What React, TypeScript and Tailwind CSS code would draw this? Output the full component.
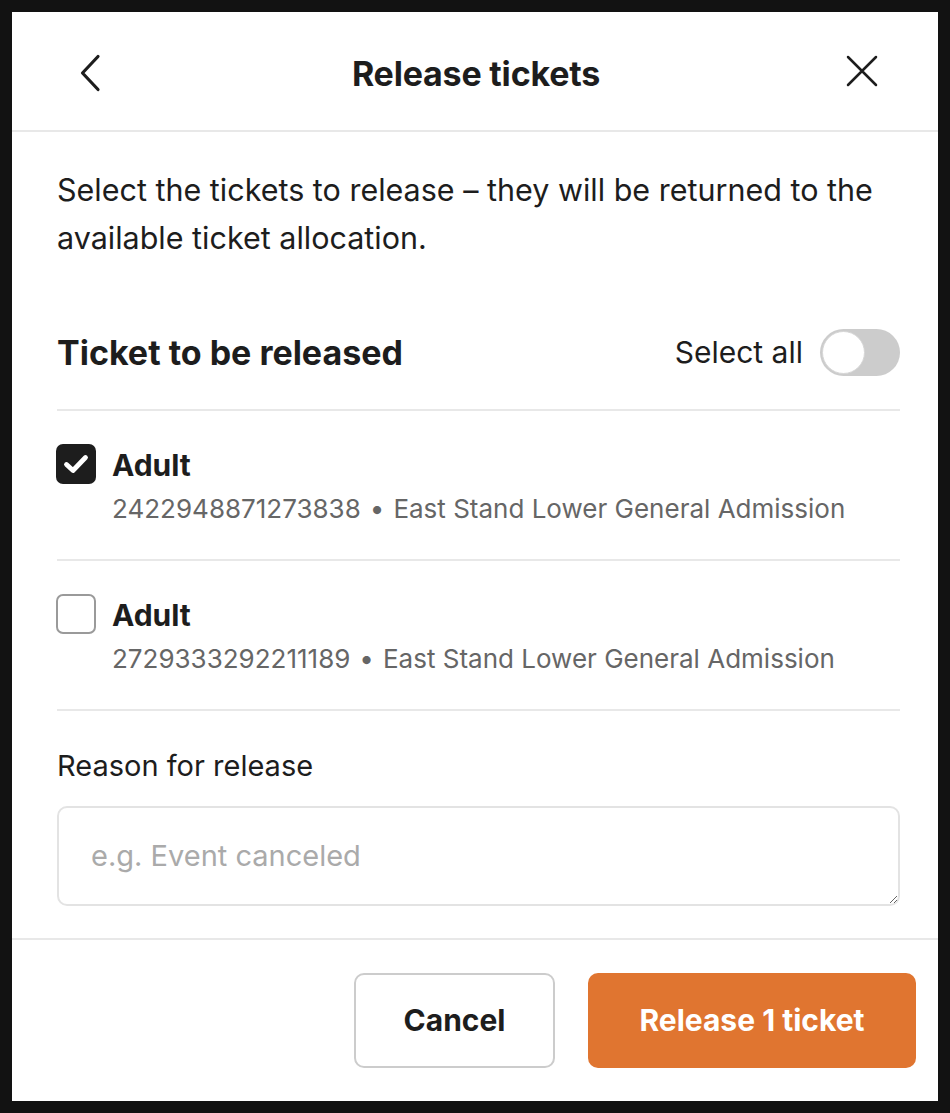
import React, { useState } from 'react';

interface Ticket {
  id: string;
  label: string;
  number: string;
  area: string;
}

const tickets: Ticket[] = [
  { id: 't1', label: 'Adult', number: '2422948871273838', area: 'East Stand Lower General Admission' },
  { id: 't2', label: 'Adult', number: '2729333292211189', area: 'East Stand Lower General Admission' },
];

const App: React.FC = () => {
  const [selected, setSelected] = useState<string[]>(['t1']);
  const [selectAll, setSelectAll] = useState(false);
  const [reason, setReason] = useState('');

  const toggle = (id: string) => {
    setSelected((prev) => (prev.includes(id) ? prev.filter((x) => x !== id) : [...prev, id]));
  };

  return (
    <div className="min-h-screen bg-[#121212] pt-3 pl-3 pr-3 pb-[13px] font-['Inter',sans-serif] text-[#1d1d1d]">
      <div className="flex flex-col bg-white">
        {/* Header */}
        <div className="flex h-[120px] items-center justify-between border-b-2 border-[#e8e8e8] pl-[66px] pr-[56px]">
          <button className="-ml-2 mt-[3px] flex h-10 w-10 items-center justify-center">
            <svg width="22" height="38" viewBox="0 0 22 38" fill="none">
              <path d="M19 2.5 L3.5 19 L19 35.5" stroke="#1d1d1d" strokeWidth="3.2" strokeLinecap="round" strokeLinejoin="round" />
            </svg>
          </button>
          <h1 className="mt-[4px] text-[34px] font-bold tracking-[-0.2px]">Release tickets</h1>
          <button className="flex h-10 w-10 items-center justify-center">
            <svg width="32" height="32" viewBox="0 0 32 32" fill="none">
              <path d="M2 2 L30 30 M30 2 L2 30" stroke="#1d1d1d" strokeWidth="2.5" strokeLinecap="round" />
            </svg>
          </button>
        </div>

        {/* Body */}
        <div className="flex flex-col pl-[45px] pr-[38px]">
          <p className="pt-[34px] text-[30.5px] leading-[48px] text-[#1d1d1d]">
            Select the tickets to release – they will be returned to the available ticket allocation.
          </p>

          <div className="flex items-center justify-between pt-[67px] pb-[33px]">
            <h2 className="text-[34px] font-bold leading-[46px]">Ticket to be released</h2>
            <label className="flex items-center gap-[17px]">
              <span className="text-[30px]">Select all</span>
              <button
                onClick={() => setSelectAll(!selectAll)}
                className={`relative h-[47px] w-[80px] rounded-full ${selectAll ? 'bg-[#1d1d1d]' : 'bg-[#cccccc]'}`}
              >
                <span
                  className={`absolute top-[2px] h-[43px] w-[43px] rounded-full border border-[#d6d6d6] bg-white ${
                    selectAll ? 'left-[35px]' : 'left-[2px]'
                  }`}
                />
              </button>
            </label>
          </div>

          {tickets.map((t) => {
            const checked = selected.includes(t.id);
            return (
              <div key={t.id} className="flex h-[150px] items-start gap-[16px] border-t-2 border-[#e8e8e8] pt-[33px]">
                <button
                  onClick={() => toggle(t.id)}
                  className={`-ml-px flex h-10 w-10 shrink-0 items-center justify-center rounded-[7px] ${
                    checked ? 'bg-[#1d1d1d]' : 'border-2 border-[#9a9a9a] bg-white'
                  }`}
                >
                  {checked && (
                    <svg width="28" height="24" viewBox="0 0 28 24" fill="none">
                      <path d="M4.5 12.5 L11 18.5 L23.5 5.5" stroke="white" strokeWidth="4.8" strokeLinecap="round" strokeLinejoin="round" />
                    </svg>
                  )}
                </button>
                <div className="flex flex-col">
                  <span className="text-[30px] font-bold leading-[42px]">{t.label}</span>
                  <span className="mt-[6px] text-[26px] leading-[34px] text-[#666666]">
                    {t.number}
                    <span className="mx-[9px]">•</span>
                    {t.area}
                  </span>
                </div>
              </div>
            );
          })}

          <div className="border-t-2 border-[#e8e8e8] pt-[35px]">
            <label className="block text-[29px] leading-[40px] text-[#1d1d1d]">Reason for release</label>
            <textarea
              value={reason}
              onChange={(e) => setReason(e.target.value)}
              placeholder="e.g. Event canceled"
              className="mt-[20px] block h-[100px] w-full rounded-[10px] border-2 border-[#e3e3e3] px-[32px] py-[30px] text-[29px] leading-[36px] text-[#1d1d1d] outline-none placeholder:text-[#aaaaaa]"
            />
          </div>
        </div>

        {/* Footer */}
        <div className="mt-[32px] flex justify-end gap-[33px] border-t-2 border-[#e8e8e8] pt-[33px] pb-[33px] pr-[22px]">
          <button className="h-[95px] w-[201px] rounded-[10px] border-2 border-[#cccccc] bg-white text-[30px] font-bold text-[#1d1d1d]">
            Cancel
          </button>
          <button className="h-[95px] w-[328px] rounded-[10px] bg-[#e07530] text-[30px] font-bold text-white">
            Release {selected.length} ticket{selected.length === 1 ? '' : 's'}
          </button>
        </div>
      </div>
    </div>
  );
};

export default App;
